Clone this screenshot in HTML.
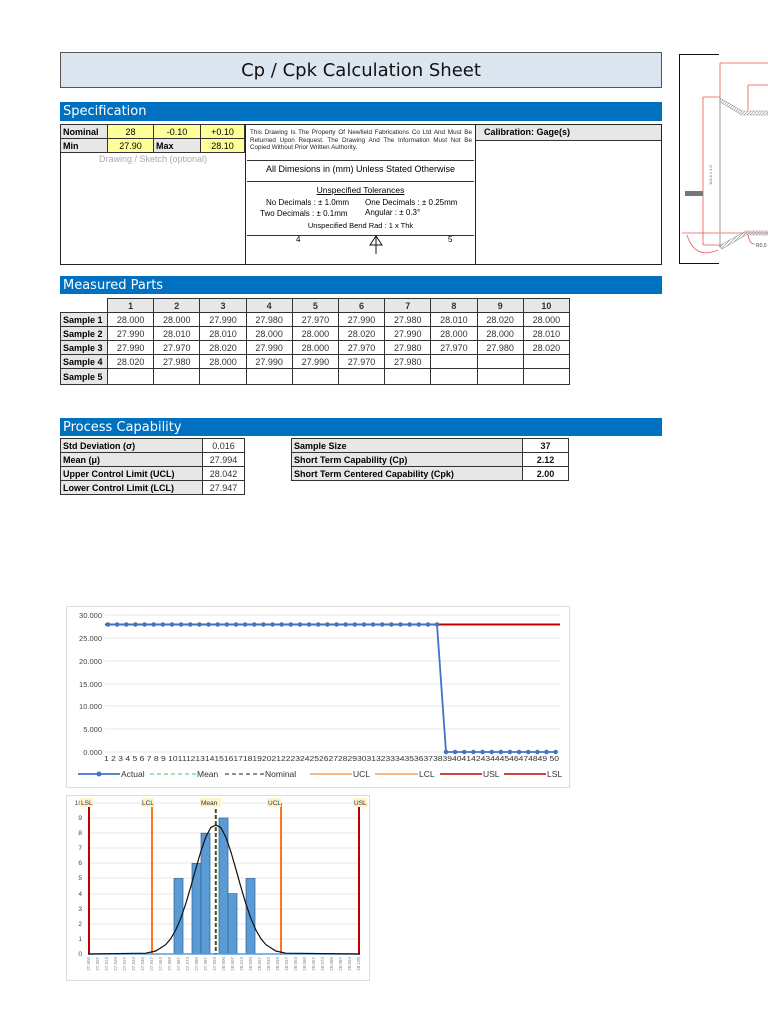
<!DOCTYPE html>
<html><head><meta charset="utf-8"><style>
body{margin:0;width:768px;height:1024px;background:#fff;position:relative;overflow:hidden;font-family:"Liberation Sans","DejaVu Sans",sans-serif;}
.a{position:absolute;box-sizing:border-box;}
.bar{background:#0070c0;color:#fff;font-size:13px;padding-left:3px;line-height:19px;font-family:"DejaVu Sans",sans-serif;}
table{border-collapse:collapse;position:absolute;font-size:9px;}
td{border:1px solid #333;padding:0 2px;height:14px;box-sizing:border-box;}
.g{background:#e7e7e7;font-weight:bold;}
.y{background:#ffff99;text-align:center;}
.c{text-align:center;color:#333;}
</style></head><body>
<div class="a" style="left:60px;top:52px;width:602px;height:36px;background:#dce6f1;border:1px solid #555;text-align:center;font-size:18px;line-height:35px;color:#111;font-family:'DejaVu Sans',sans-serif;">Cp / Cpk Calculation Sheet</div>

<div class="a bar" style="left:60px;top:102px;width:602px;height:19px;">Specification</div>
<table style="left:60px;top:124px;width:185px;">
<tr><td class="g" style="width:47px">Nominal</td><td class="y" style="width:46px">28</td><td class="y" style="width:47px">-0.10</td><td class="y">+0.10</td></tr>
<tr><td class="g">Min</td><td class="y">27.90</td><td class="g">Max</td><td class="y">28.10</td></tr>
</table>
<div class="a" style="left:60px;top:152px;width:186px;height:113px;border:1.5px solid #222;border-top:none;text-align:center;font-size:9px;color:#aaa;padding-top:2px;">Drawing / Sketch (optional)</div>
<div class="a" style="left:245px;top:124px;width:231px;height:141px;border:1.5px solid #222;"></div>
<div class="a" style="left:250px;top:129px;width:222px;font-size:6.3px;line-height:7.5px;color:#222;text-align:justify;">This Drawing Is The Property Of Newfield Fabrications Co Ltd And Must Be Returned Upon Request. The Drawing And The Information Must Not Be Copied Without Prior Written Authority.</div>
<div class="a" style="left:247px;top:160px;width:227px;height:1px;background:#333"></div>
<div class="a" style="left:247px;top:164px;width:227px;text-align:center;font-size:9px;">All Dimesions in (mm) Unless Stated Otherwise</div>
<div class="a" style="left:247px;top:181px;width:227px;height:1px;background:#333"></div>
<div class="a" style="left:247px;top:185px;width:227px;text-align:center;font-size:8.5px;text-decoration:underline;">Unspecified Tolerances</div>
<div class="a" style="left:266px;top:198px;font-size:8px;">No Decimals : ± 1.0mm</div>
<div class="a" style="left:365px;top:198px;font-size:8px;">One Decimals : ± 0.25mm</div>
<div class="a" style="left:260px;top:209px;font-size:8px;">Two Decimals : ± 0.1mm</div>
<div class="a" style="left:365px;top:208px;font-size:8px;">Angular : ± 0.3°</div>
<div class="a" style="left:247px;top:221px;width:227px;text-align:center;font-size:7.5px;">Unspecified Bend Rad : 1 x Thk</div>
<div class="a" style="left:247px;top:235px;width:227px;height:1px;background:#333"></div>
<div class="a" style="left:296px;top:235px;font-size:8px;">4</div>
<div class="a" style="left:448px;top:235px;font-size:8px;">5</div>
<svg class="a" style="left:366px;top:235px" width="20" height="20"><path d="M10 1 L4 10 H16 Z M10 1 V19" fill="none" stroke="#111" stroke-width="1"/></svg>
<div class="a" style="left:475px;top:124px;width:187px;height:141px;border:1.5px solid #222;"></div>
<div class="a" style="left:476px;top:125px;width:185px;height:16px;background:#e7e7e7;border-bottom:1px solid #333;font-size:9px;font-weight:bold;padding:2px 0 0 8px;">Calibration: Gage(s)</div>

<div class="a" style="left:679px;top:54px;width:40px;height:210px;border:1.5px solid #111;border-right:none;"></div>
<svg class="a" style="left:670px;top:45px" width="98" height="240">
<defs><pattern id="h" width="3" height="3" patternUnits="userSpaceOnUse"><path d="M0 3L3 0" stroke="#888" stroke-width="0.6"/></pattern></defs>
<g stroke="#e55" stroke-width="0.8" fill="none">
<path d="M50 18 H98 M50 18 V55 M78 40 H98 M78 40 V65 M33 52 H50 M33 52 V200 M33 200 H50 M12 188 H98 M17 190 Q25 215 48 205"/>
<path d="M78 190 Q80 200 85 199"/>
</g>
<path d="M50 53 L72 66 H98 V70 H72 L50 57 Z" fill="url(#h)" stroke="#999" stroke-width="0.6"/>
<path d="M76 186 H98 V190 H76 L52 204 L49 201 Z" fill="url(#h)" stroke="#999" stroke-width="0.6"/>
<path d="M50 55 V202" stroke="#aaa" stroke-width="1.2" fill="none"/>
<rect x="15" y="146" width="18" height="5" fill="#777"/>
<text x="86" y="202" font-size="5" fill="#444">R0.0</text>
<text transform="translate(42,140) rotate(-90)" font-size="4" fill="#666">113.8 ± 1.0</text>
</svg>

<div class="a bar" style="left:60px;top:276px;width:602px;height:18px;">Measured Parts</div>
<table style="left:60px;top:298px;width:510px;font-size:9px;">
<tr><td style="border:none;border-bottom:1px solid #333;width:47px"></td><td class="g c" style="font-weight:bold">1</td><td class="g c">2</td><td class="g c">3</td><td class="g c">4</td><td class="g c">5</td><td class="g c">6</td><td class="g c">7</td><td class="g c">8</td><td class="g c">9</td><td class="g c">10</td></tr>
<tr><td class="g">Sample 1</td><td class="c">28.000</td><td class="c">28.000</td><td class="c">27.990</td><td class="c">27.980</td><td class="c">27.970</td><td class="c">27.990</td><td class="c">27.980</td><td class="c">28.010</td><td class="c">28.020</td><td class="c">28.000</td></tr>
<tr><td class="g">Sample 2</td><td class="c">27.990</td><td class="c">28.010</td><td class="c">28.010</td><td class="c">28.000</td><td class="c">28.000</td><td class="c">28.020</td><td class="c">27.990</td><td class="c">28.000</td><td class="c">28.000</td><td class="c">28.010</td></tr>
<tr><td class="g">Sample 3</td><td class="c">27.990</td><td class="c">27.970</td><td class="c">28.020</td><td class="c">27.990</td><td class="c">28.000</td><td class="c">27.970</td><td class="c">27.980</td><td class="c">27.970</td><td class="c">27.980</td><td class="c">28.020</td></tr>
<tr><td class="g">Sample 4</td><td class="c">28.020</td><td class="c">27.980</td><td class="c">28.000</td><td class="c">27.990</td><td class="c">27.990</td><td class="c">27.970</td><td class="c">27.980</td><td></td><td></td><td></td></tr>
<tr><td class="g" style="height:16px">Sample 5</td><td></td><td></td><td></td><td></td><td></td><td></td><td></td><td></td><td></td><td></td></tr>
</table>

<div class="a bar" style="left:60px;top:418px;width:602px;height:18px;">Process Capability</div>
<table style="left:60px;top:438px;width:185px;">
<tr><td class="g">Std Deviation (σ)</td><td class="c" style="width:42px">0.016</td></tr>
<tr><td class="g">Mean (μ)</td><td class="c">27.994</td></tr>
<tr><td class="g">Upper Control Limit (UCL)</td><td class="c">28.042</td></tr>
<tr><td class="g">Lower Control Limit (LCL)</td><td class="c">27.947</td></tr>
</table>
<table style="left:291px;top:438px;width:278px;">
<tr><td class="g">Sample Size</td><td class="c" style="width:46px;font-weight:bold;color:#111">37</td></tr>
<tr><td class="g">Short Term Capability (Cp)</td><td class="c" style="font-weight:bold;color:#111">2.12</td></tr>
<tr><td class="g">Short Term Centered Capability (Cpk)</td><td class="c" style="font-weight:bold;color:#111">2.00</td></tr>
</table>

<svg class="a" style="left:0;top:0" width="768" height="1024" font-family="Liberation Sans, sans-serif">
<rect x="66.5" y="606.5" width="503" height="181" fill="none" stroke="#ddd"/>
<g stroke="#e0e0e0" stroke-width="0.8">
<path d="M105 615H560M105 638H560M105 661H560M105 684H560M105 706H560M105 729H560M105 752H560"/>
</g>
<g font-size="7.5" fill="#444" text-anchor="end">
<text x="102" y="618">30.000</text><text x="102" y="641">25.000</text><text x="102" y="664">20.000</text><text x="102" y="687">15.000</text><text x="102" y="709">10.000</text><text x="102" y="732">5.000</text><text x="102" y="755">0.000</text>
</g>
<path d="M105 624.5H560" stroke="#c00000" stroke-width="2"/>
<path d="M108 624.5H437L446 752H556" stroke="#4472c4" stroke-width="1.8" fill="none"/>
<path d="M108 624.5H438" stroke="#4472c4" stroke-width="4.5" stroke-linecap="round" stroke-dasharray="0 9.14"/>
<path d="M446 752H557" stroke="#4472c4" stroke-width="4.5" stroke-linecap="round" stroke-dasharray="0 9.14"/>
<text x="104" y="761" font-size="7" fill="#333" textLength="455" lengthAdjust="spacingAndGlyphs">1 2 3 4 5 6 7 8 9 10111213141516171819202122232425262728293031323334353637383940414243444546474849 50</text>
<g font-size="8.5" fill="#333">
<path d="M78 774H120" stroke="#4472c4" stroke-width="1.8"/><circle cx="99" cy="774" r="2.5" fill="#4472c4"/><text x="121" y="777">Actual</text>
<path d="M150 774H196" stroke="#3c6" stroke-dasharray="4 3"/><text x="197" y="777">Mean</text>
<path d="M225 774H264" stroke="#222" stroke-dasharray="4 3"/><text x="265" y="777">Nominal</text>
<path d="M310 774H352" stroke="#f4a460" stroke-width="1.5"/><text x="353" y="777">UCL</text>
<path d="M375 774H418" stroke="#f4a460" stroke-width="1.5"/><text x="419" y="777">LCL</text>
<path d="M440 774H482" stroke="#c00000" stroke-width="1.5"/><text x="483" y="777">USL</text>
<path d="M504 774H546" stroke="#c00000" stroke-width="1.5"/><text x="547" y="777">LSL</text>
</g>

<rect x="66.5" y="795.5" width="303" height="185" fill="none" stroke="#ddd"/>
<g stroke="#e0e0e0" stroke-width="0.8">
<path d="M88 803H360M88 818H360M88 833H360M88 848H360M88 863H360M88 878H360M88 894H360M88 909H360M88 924H360M88 939H360"/>
</g>
<g font-size="6.5" fill="#444" text-anchor="end">
<text x="82" y="805">10</text><text x="82" y="820">9</text><text x="82" y="835">8</text><text x="82" y="850">7</text><text x="82" y="865">6</text><text x="82" y="880">5</text><text x="82" y="896">4</text><text x="82" y="911">3</text><text x="82" y="926">2</text><text x="82" y="941">1</text><text x="82" y="956">0</text>
</g>
<g fill="#5b9bd5" stroke="#2e5f94" stroke-width="0.7">
<rect x="174" y="878.5" width="9" height="75.5"/>
<rect x="192" y="863.4" width="9" height="90.6"/>
<rect x="201" y="833.2" width="9" height="120.8"/>
<rect x="219" y="818" width="9" height="136"/>
<rect x="228" y="893.6" width="9" height="60.4"/>
<rect x="246" y="878.5" width="9" height="75.5"/>
</g>
<path d="M88 954H360" stroke="#5b9bd5" stroke-width="1.5"/>
<path d="M89 803V954M359 803V954" stroke="#c00000" stroke-width="2"/>
<path d="M152 803V954M281 803V954" stroke="#ff6600" stroke-width="1.8"/>
<path d="M215.8 803V954" stroke="#375623" stroke-width="2" stroke-dasharray="4 2"/>
<polyline fill="none" stroke="#111" stroke-width="1.2" points="88,954 145.8,953.2 155.8,951 165.8,944.6 170.8,938.5 175.8,929.9 180.8,918.2 185.8,903.6 190.8,886.7 195.8,868.8 200.8,851.5 205.8,837 210.8,827.5 215.8,825.1 220.8,827.5 225.8,837 230.8,851.5 235.8,868.8 240.8,886.7 245.8,903.6 250.8,918.2 255.8,929.9 260.8,938.5 265.8,944.6 275.8,951 285.8,953.2 360,954"/>
<g font-size="6.5" fill="#333">
<rect x="80" y="798" width="13" height="9" fill="#fdf2cc"/><text x="81" y="805">LSL</text>
<rect x="141" y="798" width="13" height="9" fill="#fdf2cc"/><text x="142" y="805">LCL</text>
<rect x="200" y="798" width="21" height="9" fill="#fdf2cc"/><text x="201" y="805">Mean</text>
<rect x="267" y="798" width="14" height="9" fill="#fdf2cc"/><text x="268" y="805">UCL</text>
<rect x="353" y="798" width="14" height="9" fill="#fdf2cc"/><text x="354" y="805">USL</text>
</g>
<g font-size="4.5" fill="#888" text-anchor="end">
<text transform="translate(90,957) rotate(-90)">27.900</text>
<text transform="translate(99,957) rotate(-90)">27.907</text>
<text transform="translate(108,957) rotate(-90)">27.913</text>
<text transform="translate(117,957) rotate(-90)">27.920</text>
<text transform="translate(126,957) rotate(-90)">27.927</text>
<text transform="translate(135,957) rotate(-90)">27.933</text>
<text transform="translate(144,957) rotate(-90)">27.940</text>
<text transform="translate(153,957) rotate(-90)">27.947</text>
<text transform="translate(162,957) rotate(-90)">27.953</text>
<text transform="translate(171,957) rotate(-90)">27.960</text>
<text transform="translate(180,957) rotate(-90)">27.967</text>
<text transform="translate(189,957) rotate(-90)">27.973</text>
<text transform="translate(198,957) rotate(-90)">27.980</text>
<text transform="translate(207,957) rotate(-90)">27.987</text>
<text transform="translate(216,957) rotate(-90)">27.993</text>
<text transform="translate(225,957) rotate(-90)">28.000</text>
<text transform="translate(234,957) rotate(-90)">28.007</text>
<text transform="translate(243,957) rotate(-90)">28.013</text>
<text transform="translate(252,957) rotate(-90)">28.020</text>
<text transform="translate(261,957) rotate(-90)">28.027</text>
<text transform="translate(270,957) rotate(-90)">28.033</text>
<text transform="translate(279,957) rotate(-90)">28.040</text>
<text transform="translate(288,957) rotate(-90)">28.047</text>
<text transform="translate(297,957) rotate(-90)">28.053</text>
<text transform="translate(306,957) rotate(-90)">28.060</text>
<text transform="translate(315,957) rotate(-90)">28.067</text>
<text transform="translate(324,957) rotate(-90)">28.073</text>
<text transform="translate(333,957) rotate(-90)">28.080</text>
<text transform="translate(342,957) rotate(-90)">28.087</text>
<text transform="translate(351,957) rotate(-90)">28.093</text>
<text transform="translate(360,957) rotate(-90)">28.100</text>
</g>
</svg>
</body></html>
